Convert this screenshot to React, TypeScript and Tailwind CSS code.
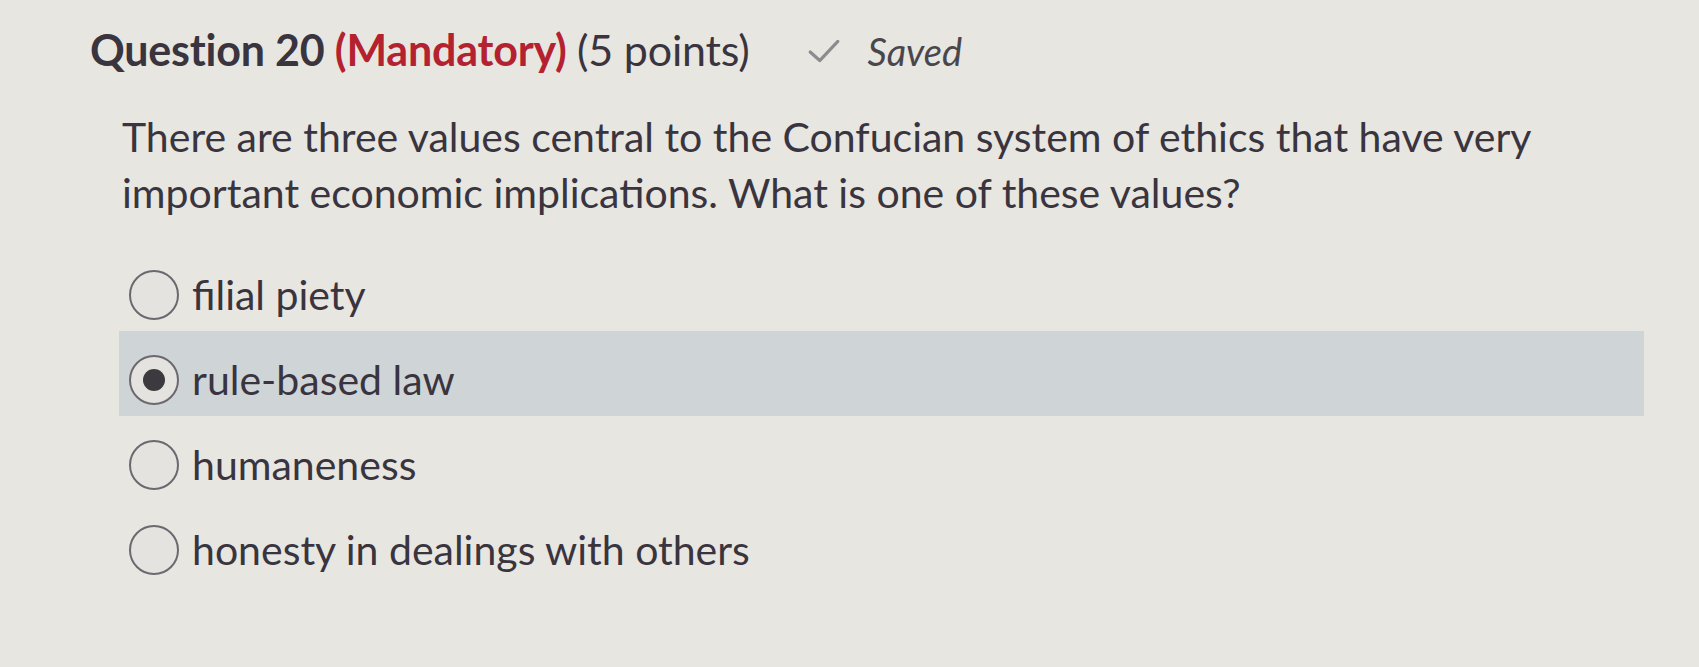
import { useState } from 'react';

const options = ['filial piety', 'rule-based law', 'humaneness', 'honesty in dealings with others'];

const App = () => {
  const [selected, setSelected] = useState(1);

  return (
    <div className="min-h-screen w-full bg-[#e7e6e1] font-['Lato','Open_Sans',sans-serif] text-[#39343e]">
      <div className="pl-[90px] pt-[28px]">
        <div className="flex items-baseline h-[52px]">
          <h2 className="text-[43px] font-bold tracking-[-0.2px] leading-none">
            Question 20 <span className="text-[#b4212f]">(Mandatory)</span>{' '}
            <span className="font-normal">(5 points)</span>
          </h2>
          <span className="ml-[58px] flex items-baseline text-[#4a474c]">
            <svg width="34" height="26" viewBox="0 0 32 24" className="self-center mr-[26px]">
              <path d="M3 13 L12 21 L29 3" fill="none" stroke="#8d8b8f" strokeWidth="3" strokeLinecap="round" strokeLinejoin="round" />
            </svg>
            <span className="italic text-[38px] leading-none">Saved</span>
          </span>
        </div>

        <p className="mt-[29px] pl-[32px] text-[41px] leading-[56px] max-w-[1560px]">
          There are three values central to the Confucian system of ethics that have very important economic
          implications. What is one of these values?
        </p>

        <div className="mt-[25px] ml-[29px] w-[1525px]">
          {options.map((opt, i) => (
            <div
              key={opt}
              onClick={() => setSelected(i)}
              className={`flex items-center h-[85px] pl-[10px] pt-[12px] ${selected === i ? 'bg-[#cfd5d7]' : ''}`}
            >
              <span className="flex h-[50px] w-[50px] shrink-0 items-center justify-center rounded-full border-2 border-[#6c686f] bg-[#e4e3df]">
                {selected === i && <span className="block h-[22px] w-[22px] rounded-full bg-[#3c3a3e]" />}
              </span>
              <span className="ml-[13px] text-[41px] leading-none">{opt}</span>
            </div>
          ))}
        </div>
      </div>
    </div>
  );
};

export default App;
